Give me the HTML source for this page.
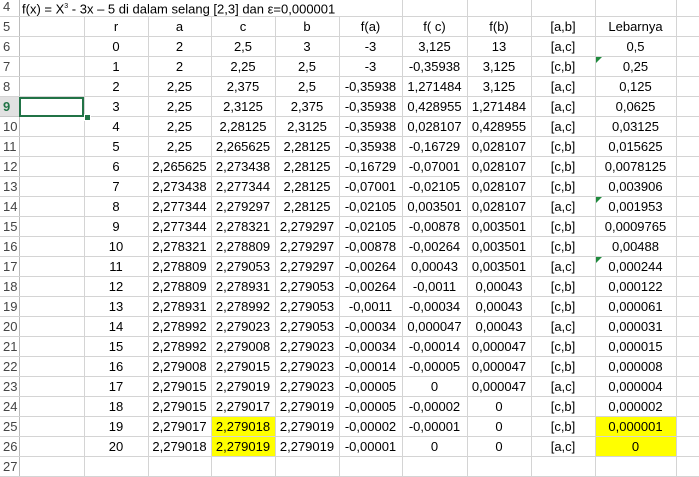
<!DOCTYPE html>
<html><head><style>
body{margin:0;width:699px;height:463px;overflow:hidden;background:#fff;font-family:"Liberation Sans",Calibri,sans-serif;font-size:13px;color:#000;position:relative}
table{border-collapse:collapse;table-layout:fixed;position:absolute;left:0;top:-3px;width:706px}
td{height:19px;padding:0;border-right:1px solid #d4d4d4;border-bottom:1px solid #d4d4d4;text-align:center;white-space:nowrap;overflow:hidden;line-height:19px}
td.h{text-align:left;padding-left:3px;color:#444;background:#fff;border-right:1px solid #bdbdbd;font-size:13px}
td.sel{color:#217346;font-weight:bold;background:#e1e1e1;border-bottom:1px solid #c6c6c6}
.y{background:#ffff00}
.nb{border-right:none}
.g{position:absolute;width:0;height:0;border-top:6px solid #1e8a3c;border-right:6px solid transparent}
</style></head><body>
<table>
<colgroup><col style="width:19px"><col style="width:65px"><col style="width:64px"><col style="width:63px"><col style="width:64px"><col style="width:64px"><col style="width:63px"><col style="width:65px"><col style="width:64px"><col style="width:64px"><col style="width:81px"><col style="width:30px"></colgroup>
<tr><td class="h">4</td><td class="nb"></td><td class="nb"></td><td class="nb"></td><td class="nb"></td><td class="nb"></td><td></td><td></td><td></td><td></td><td></td><td></td></tr>
<tr><td class="h">5</td><td></td><td>r</td><td>a</td><td>c</td><td>b</td><td>f(a)</td><td>f( c)</td><td>f(b)</td><td>[a,b]</td><td>Lebarnya</td><td></td></tr>
<tr><td class="h">6</td><td></td><td>0</td><td>2</td><td>2,5</td><td>3</td><td>-3</td><td>3,125</td><td>13</td><td>[a,c]</td><td>0,5</td><td></td></tr>
<tr><td class="h">7</td><td></td><td>1</td><td>2</td><td>2,25</td><td>2,5</td><td>-3</td><td>-0,35938</td><td>3,125</td><td>[c,b]</td><td>0,25</td><td></td></tr>
<tr><td class="h">8</td><td></td><td>2</td><td>2,25</td><td>2,375</td><td>2,5</td><td>-0,35938</td><td>1,271484</td><td>3,125</td><td>[a,c]</td><td>0,125</td><td></td></tr>
<tr><td class="h sel">9</td><td style="outline:2px solid #217346;outline-offset:-2px"></td><td>3</td><td>2,25</td><td>2,3125</td><td>2,375</td><td>-0,35938</td><td>0,428955</td><td>1,271484</td><td>[a,c]</td><td>0,0625</td><td></td></tr>
<tr><td class="h">10</td><td></td><td>4</td><td>2,25</td><td>2,28125</td><td>2,3125</td><td>-0,35938</td><td>0,028107</td><td>0,428955</td><td>[a,c]</td><td>0,03125</td><td></td></tr>
<tr><td class="h">11</td><td></td><td>5</td><td>2,25</td><td>2,265625</td><td>2,28125</td><td>-0,35938</td><td>-0,16729</td><td>0,028107</td><td>[c,b]</td><td>0,015625</td><td></td></tr>
<tr><td class="h">12</td><td></td><td>6</td><td>2,265625</td><td>2,273438</td><td>2,28125</td><td>-0,16729</td><td>-0,07001</td><td>0,028107</td><td>[c,b]</td><td>0,0078125</td><td></td></tr>
<tr><td class="h">13</td><td></td><td>7</td><td>2,273438</td><td>2,277344</td><td>2,28125</td><td>-0,07001</td><td>-0,02105</td><td>0,028107</td><td>[c,b]</td><td>0,003906</td><td></td></tr>
<tr><td class="h">14</td><td></td><td>8</td><td>2,277344</td><td>2,279297</td><td>2,28125</td><td>-0,02105</td><td>0,003501</td><td>0,028107</td><td>[a,c]</td><td>0,001953</td><td></td></tr>
<tr><td class="h">15</td><td></td><td>9</td><td>2,277344</td><td>2,278321</td><td>2,279297</td><td>-0,02105</td><td>-0,00878</td><td>0,003501</td><td>[c,b]</td><td>0,0009765</td><td></td></tr>
<tr><td class="h">16</td><td></td><td>10</td><td>2,278321</td><td>2,278809</td><td>2,279297</td><td>-0,00878</td><td>-0,00264</td><td>0,003501</td><td>[c,b]</td><td>0,00488</td><td></td></tr>
<tr><td class="h">17</td><td></td><td>11</td><td>2,278809</td><td>2,279053</td><td>2,279297</td><td>-0,00264</td><td>0,00043</td><td>0,003501</td><td>[a,c]</td><td>0,000244</td><td></td></tr>
<tr><td class="h">18</td><td></td><td>12</td><td>2,278809</td><td>2,278931</td><td>2,279053</td><td>-0,00264</td><td>-0,0011</td><td>0,00043</td><td>[c,b]</td><td>0,000122</td><td></td></tr>
<tr><td class="h">19</td><td></td><td>13</td><td>2,278931</td><td>2,278992</td><td>2,279053</td><td>-0,0011</td><td>-0,00034</td><td>0,00043</td><td>[c,b]</td><td>0,000061</td><td></td></tr>
<tr><td class="h">20</td><td></td><td>14</td><td>2,278992</td><td>2,279023</td><td>2,279053</td><td>-0,00034</td><td>0,000047</td><td>0,00043</td><td>[a,c]</td><td>0,000031</td><td></td></tr>
<tr><td class="h">21</td><td></td><td>15</td><td>2,278992</td><td>2,279008</td><td>2,279023</td><td>-0,00034</td><td>-0,00014</td><td>0,000047</td><td>[c,b]</td><td>0,000015</td><td></td></tr>
<tr><td class="h">22</td><td></td><td>16</td><td>2,279008</td><td>2,279015</td><td>2,279023</td><td>-0,00014</td><td>-0,00005</td><td>0,000047</td><td>[c,b]</td><td>0,000008</td><td></td></tr>
<tr><td class="h">23</td><td></td><td>17</td><td>2,279015</td><td>2,279019</td><td>2,279023</td><td>-0,00005</td><td>0</td><td>0,000047</td><td>[a,c]</td><td>0,000004</td><td></td></tr>
<tr><td class="h">24</td><td></td><td>18</td><td>2,279015</td><td>2,279017</td><td>2,279019</td><td>-0,00005</td><td>-0,00002</td><td>0</td><td>[c,b]</td><td>0,000002</td><td></td></tr>
<tr><td class="h">25</td><td></td><td>19</td><td>2,279017</td><td class="y">2,279018</td><td>2,279019</td><td>-0,00002</td><td>-0,00001</td><td>0</td><td>[c,b]</td><td class="y">0,000001</td><td></td></tr>
<tr><td class="h">26</td><td></td><td>20</td><td>2,279018</td><td class="y">2,279019</td><td>2,279019</td><td>-0,00001</td><td>0</td><td>0</td><td>[a,c]</td><td class="y">0</td><td></td></tr>
<tr><td class="h">27</td><td></td><td></td><td></td><td></td><td></td><td></td><td></td><td></td><td></td><td></td><td></td></tr>
</table>
<div style="position:absolute;left:22px;top:-3px;height:19px;line-height:19px;white-space:nowrap;background:#fff;padding-right:2px">f(x) = X<sup style="font-size:7px">3</sup> - 3x – 5 di dalam selang [2,3] dan ε=0,000001</div>
<div style="position:absolute;left:84px;top:114px;width:5px;height:5px;background:#217346;border:1px solid #fff"></div>
<div class="g" style="left:596px;top:57px"></div>
<div class="g" style="left:596px;top:197px"></div>
<div class="g" style="left:596px;top:257px"></div>
</body></html>
